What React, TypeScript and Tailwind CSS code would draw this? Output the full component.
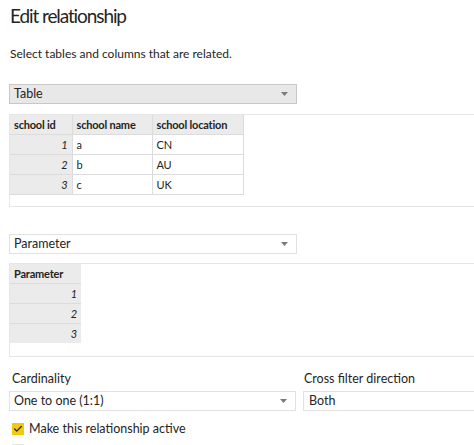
import { Check } from "lucide-react";

const schools = [
  { id: 1, name: "a", location: "CN" },
  { id: 2, name: "b", location: "AU" },
  { id: 3, name: "c", location: "UK" },
];

function Caret() {
  return (
    <svg width="7" height="4" viewBox="0 0 7 4" className="fill-[#7a7a7a]">
      <path d="M0 0h7L3.5 4z" />
    </svg>
  );
}

function Select({ label, grey, className }: { label: string; grey?: boolean; className?: string }) {
  return (
    <div
      className={`flex items-center justify-between h-[20px] pl-[4px] pr-[8px] border text-[12.5px] text-[#252423] ${
        grey ? "bg-[#e8e8e8] border-[#c8c8c8]" : "bg-white border-[#e1e1e1]"
      } ${className ?? ""}`}
    >
      <span>{label}</span>
      <Caret />
    </div>
  );
}

const head = "h-[19px] px-[4px] text-left font-bold bg-[#ebebeb] border-r border-[#dcdcdc]";
const idCell = "h-[19px] px-[4px] text-right italic bg-[#ebebeb] border-t border-r border-[#dcdcdc]";
const cell = "h-[19px] px-[4px] border-t border-r border-[#dcdcdc] bg-white";

export default function App() {
  return (
    <div
      className="w-[474px] h-[445px] overflow-hidden bg-white text-[#252423]"
      style={{ fontFamily: 'Lato, "Noto Sans", sans-serif' }}
    >
      <h1 className="pl-[10px] pt-[3px] text-[19px] leading-[26px] tracking-[-1.1px]">Edit relationship</h1>
      <p className="pl-[10px] mt-[17px] text-[12px] leading-[16px]">Select tables and columns that are related.</p>

      <Select label="Table" grey className="mt-[22px] ml-[9px] w-[288px]" />

      <div className="mt-[10px] ml-[9px] h-[93px] border-l border-t border-b border-[#e6e6e6]">
        <table className="border-collapse text-[11px] leading-[19px] tracking-[-0.2px]">
          <thead>
            <tr>
              <th className={`${head} w-[62px]`}>school id</th>
              <th className={`${head} w-[80px]`}>school name</th>
              <th className={`${head} w-[91px]`}>school location</th>
            </tr>
          </thead>
          <tbody>
            {schools.map((s) => (
              <tr key={s.id}>
                <td className={idCell}>{s.id}</td>
                <td className={cell}>{s.name}</td>
                <td className={cell}>{s.location}</td>
              </tr>
            ))}
            <tr>
              <td className="h-0 border-t border-[#dcdcdc]" colSpan={3} />
            </tr>
          </tbody>
        </table>
      </div>

      <Select label="Parameter" className="mt-[27px] ml-[9px] w-[288px]" />

      <div className="mt-[9px] ml-[9px] h-[94px] border-l border-t border-b border-[#e6e6e6]">
        <table className="border-collapse text-[11px] leading-[19px] tracking-[-0.2px]">
          <thead>
            <tr>
              <th className={`${head} w-[71px] border-r-0`}>Parameter</th>
            </tr>
          </thead>
          <tbody>
            {[1, 2, 3].map((n) => (
              <tr key={n}>
                <td className="h-[19px] px-[4px] text-right italic bg-[#ebebeb] border-t border-[#dcdcdc]">{n}</td>
              </tr>
            ))}
          </tbody>
        </table>
      </div>

      <div className="mt-[14px] flex gap-[7px] pl-[9px]">
        <div className="w-[287px]">
          <div className="pl-[3px] text-[12.5px] leading-[16px]">Cardinality</div>
          <Select label="One to one (1:1)" className="mt-[4px]" />
        </div>
        <div className="flex-1">
          <div className="pl-[1px] text-[12.5px] leading-[16px]">Cross filter direction</div>
          <div className="mt-[4px] h-[20px] flex items-center pl-[5px] border border-r-0 border-[#e1e1e1] text-[12.5px]">Both</div>
        </div>
      </div>

      <label className="mt-[9px] ml-[12px] flex items-center gap-[5px] text-[12.5px]">
        <span className="w-[12px] h-[12px] bg-[#f2c811] flex items-center justify-center">
          <Check size={10} strokeWidth={3} className="text-[#252423]" />
        </span>
        Make this relationship active
      </label>
      <div className="mt-[5px] ml-[12px] w-[12px] h-[12px] bg-[#e6e6e6]" />
    </div>
  );
}
